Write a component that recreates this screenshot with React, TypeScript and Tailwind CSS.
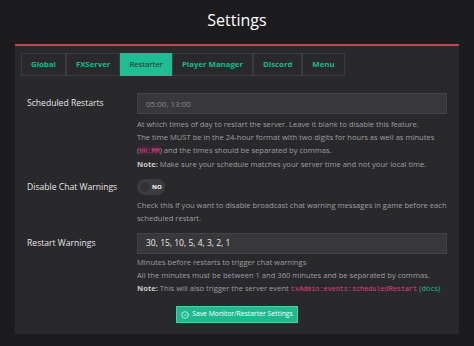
import { CircleCheck } from "lucide-react";

const tabs = ["Global", "FXServer", "Restarter", "Player Manager", "Discord", "Menu"];

function Code({ children }: { children: React.ReactNode }) {
  return (
    <code className="font-['Liberation_Mono',monospace] text-[6.8px] text-[#e0407f]">{children}</code>
  );
}

function Row({ label, children, top = "pt-[4px]" }: { label: string; children: React.ReactNode; top?: string }) {
  return (
    <div className="flex">
      <div className={`w-[110px] shrink-0 text-[8.6px] leading-[13px] text-[#e6e6e6] ${top}`}>{label}</div>
      <div className="flex-1">{children}</div>
    </div>
  );
}

function Help({ children, className = "" }: { children: React.ReactNode; className?: string }) {
  return (
    <div className={`whitespace-nowrap text-[7.6px] leading-[13px] text-[#a09fa3] ${className}`}>{children}</div>
  );
}

export default function App() {
  return (
    <div className="h-[346px] w-[474px] overflow-hidden bg-[#1c1b1d] font-['Open_Sans',sans-serif]">
      <h1 className="flex h-[44px] items-center justify-center pb-[4px] text-[16px] text-white">Settings</h1>

      <div className="mx-[15px] h-[290px] border-t-2 border-[#c5434f] bg-[#29282b] px-[6px] pt-[7px]">
        {/* Tabs */}
        <div className="flex h-[23px]">
          {tabs.map((t) => (
            <div
              key={t}
              className={
                t === "Restarter"
                  ? "flex items-center bg-[#1ebd94] px-[9px] text-[7.8px] text-[#2b2a2d]"
                  : "flex items-center border border-[#3c3b3e] px-[9px] text-[7.8px] font-bold text-[#1db98f]"
              }
            >
              {t}
            </div>
          ))}
        </div>

        {/* Form */}
        <div className="mt-[17px] flex flex-col gap-[8px] pl-[6px] pr-[6px]">
          <Row label="Scheduled Restarts">
            <div className="flex h-[21px] items-center border border-[#434245] bg-[#38373a] px-[8px] text-[8px] text-[#8c8b8f]">
              05:00, 13:00
            </div>
            <Help className="mt-[4px]">
              At which times of day to restart the server. Leave it blank to disable this feature.
              <br />
              The time MUST be in the 24-hour format with two digits for hours as well as minutes
              <br />(
              <span className="bg-[#3a2634]">
                <Code>HH:MM</Code>
              </span>
              ) and the times should be separated by commas.
              <br />
              <b className="text-[#c9c8cc]">Note:</b> Make sure your schedule matches your server time and not your local time.
            </Help>
          </Row>

          <Row label="Disable Chat Warnings" top="pt-[2px]">
            <div className="flex h-[16px] w-[28px] items-center rounded-full bg-[#3c3b3f] pl-[2px]">
              <div className="h-[12px] w-[12px] rounded-full border border-[#444347] bg-[#333236]" />
              <span className="ml-[1px] text-[6px] font-bold text-white">NO</span>
            </div>
            <Help className="mt-[4px]">
              Check this if you want to disable broadcast chat warning messages in game before each
              <br />
              scheduled restart.
            </Help>
          </Row>

          <Row label="Restart Warnings">
            <div className="flex h-[21px] items-center border border-[#434245] bg-[#38373a] px-[8px] text-[8.5px] text-[#ececec]">
              30, 15, 10, 5, 4, 3, 2, 1
            </div>
            <Help className="mt-[2px]">
              Minutes before restarts to trigger chat warnings
              <br />
              All the minutes must be between 1 and 360 minutes and be separated by commas.
              <br />
              <b className="text-[#c9c8cc]">Note:</b> This will also trigger the server event{" "}
              <Code>txAdmin:events:scheduledRestart</Code> <span className="text-[#1db98f]">(docs)</span>
            </Help>
          </Row>
        </div>

        <div className="mt-[10px] flex justify-center">
          <button
            type="button"
            className="flex h-[17px] items-center gap-[3px] border border-[#3fd4a8] bg-[#1cba8d] px-[4px] text-[6.8px] text-white"
          >
            <CircleCheck size={8} strokeWidth={2} />
            Save Monitor/Restarter Settings
          </button>
        </div>
      </div>
    </div>
  );
}
